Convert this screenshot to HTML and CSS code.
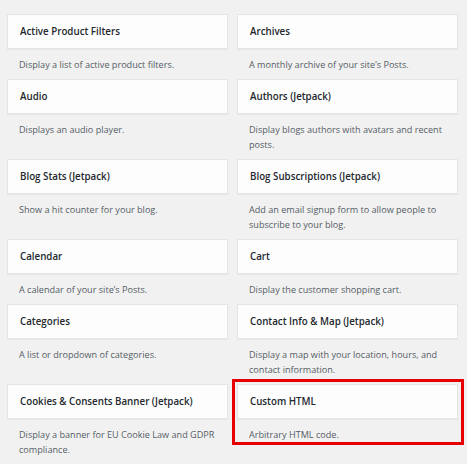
FILE: index.html
```html
<!DOCTYPE html>
<html>
<head>
<meta charset="utf-8">
<link rel="stylesheet" href="styles.css">
</head>
<body>
<div class="widgets">
  <div class="widget">
    <div class="widget-top">Active Product Filters</div>
    <div class="widget-desc">Display a list of active product filters.</div>
  </div>
  <div class="widget">
    <div class="widget-top">Archives</div>
    <div class="widget-desc">A monthly archive of your site’s Posts.</div>
  </div>
  <div class="widget">
    <div class="widget-top">Audio</div>
    <div class="widget-desc">Displays an audio player.</div>
  </div>
  <div class="widget">
    <div class="widget-top">Authors (Jetpack)</div>
    <div class="widget-desc">Display blogs authors with avatars and recent posts.</div>
  </div>
  <div class="widget">
    <div class="widget-top">Blog Stats (Jetpack)</div>
    <div class="widget-desc">Show a hit counter for your blog.</div>
  </div>
  <div class="widget">
    <div class="widget-top">Blog Subscriptions (Jetpack)</div>
    <div class="widget-desc">Add an email signup form to allow people to subscribe to your blog.</div>
  </div>
  <div class="widget">
    <div class="widget-top">Calendar</div>
    <div class="widget-desc">A calendar of your site’s Posts.</div>
  </div>
  <div class="widget">
    <div class="widget-top">Cart</div>
    <div class="widget-desc">Display the customer shopping cart.</div>
  </div>
  <div class="widget">
    <div class="widget-top">Categories</div>
    <div class="widget-desc">A list or dropdown of categories.</div>
  </div>
  <div class="widget">
    <div class="widget-top">Contact Info &amp; Map (Jetpack)</div>
    <div class="widget-desc">Display a map with your location, hours, and contact information.</div>
  </div>
  <div class="widget">
    <div class="widget-top">Cookies &amp; Consents Banner (Jetpack)</div>
    <div class="widget-desc">Display a banner for EU Cookie Law and GDPR compliance.</div>
  </div>
  <div class="widget">
    <div class="widget-top">Custom HTML</div>
    <div class="widget-desc">Arbitrary HTML code.</div>
  </div>
</div>
<div class="highlight"></div>
</body>
</html>
```
FILE: styles.css
```css
html, body {
  margin: 0;
  padding: 0;
  background: #f1f1f1;
  height: 100%;
  overflow: hidden;
}
body {
  font-family: "Open Sans", "Noto Sans", sans-serif;
  position: relative;
}
.widgets {
  display: grid;
  grid-template-columns: 221px 221px;
  column-gap: 9px;
  padding: 14px 0 0 7px;
}
.widget-top {
  box-sizing: border-box;
  height: 35px;
  display: flex;
  align-items: center;
  padding: 0 12px;
  background: #fdfdfd;
  border: 1px solid #e5e5e5;
  box-shadow: 0 1px 1px rgba(0, 0, 0, 0.04);
  font-size: 9.75px;
  font-weight: 600;
  color: #23282d;
}
.widget-desc {
  padding: 7.5px 12px 7.5px 12px;
  font-size: 9.1px;
  line-height: 15px;
  color: #555d66;
}
.highlight {
  position: absolute;
  left: 232px;
  top: 379px;
  width: 232px;
  height: 66px;
  box-sizing: border-box;
  border: 3px solid #e60000;
}
```
